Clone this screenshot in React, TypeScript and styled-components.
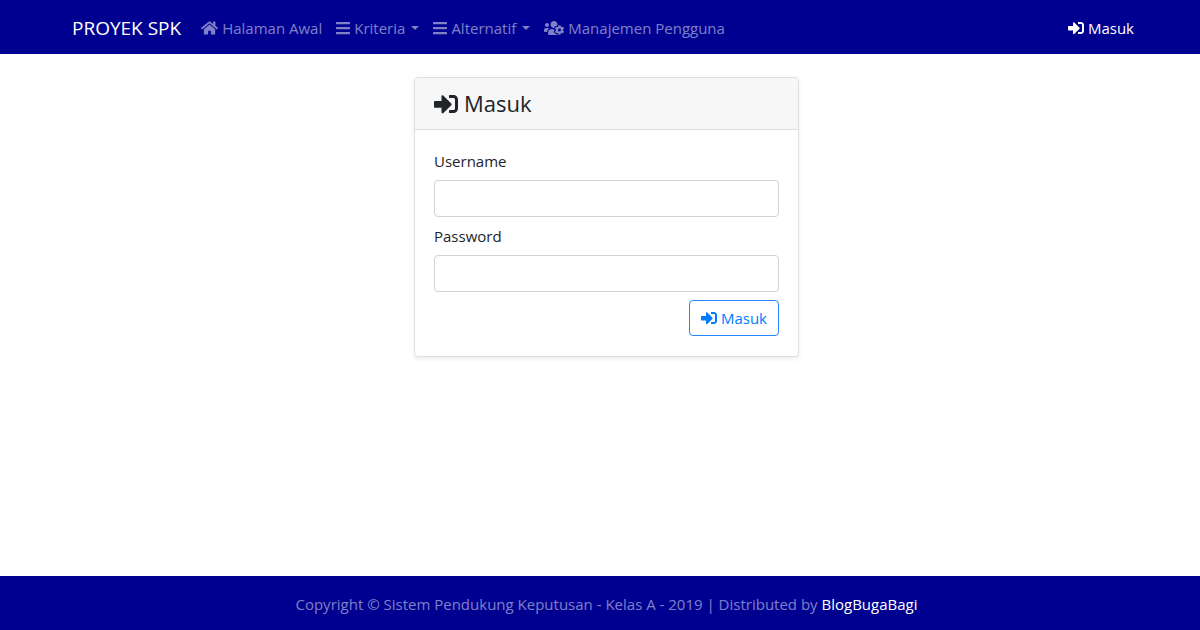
import React from "react";
import styled, { createGlobalStyle } from "styled-components";
import { FaBars, FaHome, FaSignInAlt, FaUsersCog } from "react-icons/fa";

const GlobalStyle = createGlobalStyle`
  *, *::before, *::after { box-sizing: border-box; }
  body {
    margin: 0;
    background: #fff;
    color: #212529;
    font-family: "Segoe UI", "Open Sans", "Noto Sans", sans-serif;
    font-size: 15px;
    line-height: 22px;
  }
`;

const Page = styled.div`
  display: flex;
  flex-direction: column;
  min-height: 100vh;
`;

const Navbar = styled.header`
  display: flex;
  align-items: center;
  min-height: 54px;
  padding: 2px 59px 0 72px;
  background: #000090;
`;

const Brand = styled.a`
  margin-right: 13px;
  color: #fff;
  font-size: 19px;
  line-height: 28px;
  text-decoration: none;
  white-space: nowrap;
`;

const Nav = styled.nav`
  display: flex;
  flex: 1;
`;

const NavLink = styled.a<{ $active?: boolean; $end?: boolean }>`
  display: flex;
  align-items: center;
  gap: 4px;
  padding: 8px 7px;
  margin-left: ${(p) => (p.$end ? "auto" : "0")};
  color: ${(p) => (p.$active ? "#fff" : "rgba(255, 255, 255, 0.5)")};
  text-decoration: none;
  white-space: nowrap;
`;

const Icon = styled.span<{ $width: number; $height?: number }>`
  display: inline-flex;
  flex: none;
  svg {
    display: block;
    width: ${(p) => p.$width}px;
    height: ${(p) => p.$height ?? 16}px;
  }
`;

const Caret = styled.span`
  margin-left: 2px;
  border-top: 4px solid currentColor;
  border-left: 4px solid transparent;
  border-right: 4px solid transparent;
`;

const Main = styled.main`
  display: flex;
  flex: 1;
  justify-content: center;
  align-items: flex-start;
  padding: 23px 15px 23px 28px;
`;

const Card = styled.section`
  width: 100%;
  max-width: 385px;
  border: 1px solid #dfdfdf;
  border-radius: 4px;
  background: #fff;
  box-shadow: 0 2px 4px rgba(0, 0, 0, 0.075);
`;

const CardHeader = styled.div`
  padding: 12px 19px;
  border-bottom: 1px solid #dfdfdf;
  border-radius: 3px 3px 0 0;
  background: #f7f7f7;
`;

const CardTitle = styled.h1`
  display: flex;
  align-items: center;
  gap: 6px;
  margin: 0;
  font-size: 22px;
  font-weight: 400;
  line-height: 27px;
`;

const Form = styled.form`
  display: flex;
  flex-direction: column;
  gap: 8px;
  padding: 20px 19px;
`;

const Label = styled.label`
  align-self: flex-start;
`;

const Input = styled.input`
  width: 100%;
  height: 37px;
  padding: 6px 12px;
  border: 1px solid #ced4da;
  border-radius: 4px;
  background: #fff;
  color: #495057;
  font: inherit;
`;

const SubmitButton = styled.button`
  display: flex;
  align-items: center;
  align-self: flex-end;
  gap: 4px;
  padding: 6px 11px;
  border: 1px solid #2483ff;
  border-radius: 4px;
  background: transparent;
  color: #007bff;
  font: inherit;
  cursor: pointer;
`;

const Footer = styled.footer`
  padding: 17px 15px 15px 28px;
  background: #000090;
  color: rgba(255, 255, 255, 0.5);
  text-align: center;
`;

const FooterLink = styled.a`
  color: #fff;
  text-decoration: none;
`;

export default function App() {
  return (
    <Page>
      <GlobalStyle />
      <Navbar>
        <Brand href="#">PROYEK SPK</Brand>
        <Nav>
          <NavLink href="#">
            <Icon $width={17}><FaHome /></Icon>
            Halaman Awal
          </NavLink>
          <NavLink href="#">
            <Icon $width={14}><FaBars /></Icon>
            Kriteria
            <Caret />
          </NavLink>
          <NavLink href="#">
            <Icon $width={14}><FaBars /></Icon>
            Alternatif
            <Caret />
          </NavLink>
          <NavLink href="#">
            <Icon $width={20}><FaUsersCog /></Icon>
            Manajemen Pengguna
          </NavLink>
          <NavLink href="#" $active $end>
            <Icon $width={16}><FaSignInAlt /></Icon>
            Masuk
          </NavLink>
        </Nav>
      </Navbar>
      <Main>
        <Card>
          <CardHeader>
            <CardTitle>
              <Icon $width={24} $height={24}><FaSignInAlt /></Icon>
              Masuk
            </CardTitle>
          </CardHeader>
          <Form>
            <Label htmlFor="username">Username</Label>
            <Input id="username" name="username" type="text" />
            <Label htmlFor="password">Password</Label>
            <Input id="password" name="password" type="password" />
            <SubmitButton type="submit">
              <Icon $width={16}><FaSignInAlt /></Icon>
              Masuk
            </SubmitButton>
          </Form>
        </Card>
      </Main>
      <Footer>
        Copyright © Sistem Pendukung Keputusan - Kelas A - 2019 | Distributed by{" "}
        <FooterLink href="#">BlogBugaBagi</FooterLink>
      </Footer>
    </Page>
  );
}
